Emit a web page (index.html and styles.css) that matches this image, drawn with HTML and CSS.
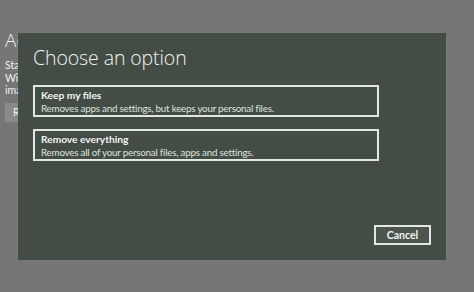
FILE: index.html
```html
<!DOCTYPE html>
<html>
<head>
<meta charset="utf-8">
<link rel="stylesheet" href="styles.css">
</head>
<body>
<div class="page">
  <div class="page-title">Ac</div>
  <div class="page-text">Sta<br>Win<br>ima</div>
  <div class="page-btn">R</div>
</div>
<div class="dialog">
  <div class="dialog-title">Choose an option</div>
  <div class="options">
    <div class="option">
      <div class="option-name">Keep my files</div>
      <div class="option-desc">Removes apps and settings, but keeps your personal files.</div>
    </div>
    <div class="option">
      <div class="option-name">Remove everything</div>
      <div class="option-desc">Removes all of your personal files, apps and settings.</div>
    </div>
  </div>
  <div class="actions">
    <div class="cancel">Cancel</div>
  </div>
</div>
</body>
</html>
```
FILE: styles.css
```css
html, body {
  margin: 0;
  padding: 0;
}
body {
  width: 474px;
  height: 292px;
  background: #767676;
  font-family: "Open Sans", "Noto Sans", sans-serif;
  color: #f2f2f2;
  overflow: hidden;
  position: relative;
}
.page {
  padding: 28px 0 0 5px;
}
.page-title {
  font-size: 19px;
  font-weight: 300;
  line-height: 24px;
  white-space: nowrap;
}
.page-text {
  margin-top: 7px;
  font-family: "Lato", sans-serif;
  font-size: 10.5px;
  line-height: 12.5px;
  white-space: nowrap;
}
.page-btn {
  margin-top: 6px;
  width: 70px;
  height: 19px;
  background: #8a8a8a;
  font-family: "Lato", sans-serif;
  font-size: 10.5px;
  line-height: 19px;
  padding-left: 8px;
  white-space: nowrap;
}
.dialog {
  position: absolute;
  left: 18px;
  top: 33px;
  width: 428px;
  height: 227px;
  background: #434d45;
  box-sizing: border-box;
  padding: 12px 67px 0 15px;
  display: flex;
  flex-direction: column;
}
.dialog-title {
  font-size: 19.5px;
  font-weight: 300;
  line-height: 26px;
  color: #f4f4f4;
  letter-spacing: -0.1px;
}
.options {
  margin-top: 14px;
  display: flex;
  flex-direction: column;
  gap: 12px;
}
.option {
  height: 32px;
  box-sizing: border-box;
  border: 2px solid #e4e6e4;
  padding: 2px 0 0 6px;
  font-family: "Lato", sans-serif;
}
.option-name {
  font-size: 10.2px;
  font-weight: 700;
  line-height: 13px;
  color: #f4f4f4;
}
.option-desc {
  font-size: 9.8px;
  line-height: 12px;
  letter-spacing: -0.22px;
  color: #dfe2df;
}
.actions {
  margin-top: auto;
  margin-right: -52px;
  margin-bottom: 15px;
  display: flex;
  justify-content: flex-end;
}
.cancel {
  width: 57px;
  height: 20px;
  box-sizing: border-box;
  border: 2px solid #e4e6e4;
  background: #4c564e;
  font-family: "Lato", sans-serif;
  font-size: 10.5px;
  font-weight: 700;
  line-height: 16px;
  text-align: center;
  color: #f4f4f4;
}
```
